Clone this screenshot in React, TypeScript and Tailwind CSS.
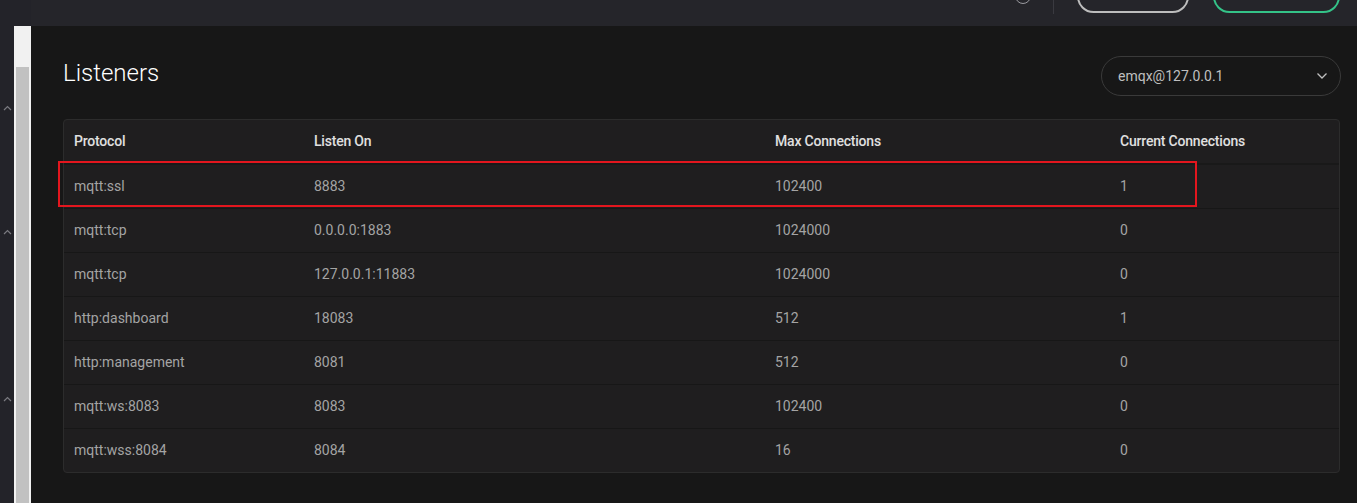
import React from "react";

const rows = [
  ["mqtt:ssl", "8883", "102400", "1"],
  ["mqtt:tcp", "0.0.0.0:1883", "1024000", "0"],
  ["mqtt:tcp", "127.0.0.1:11883", "1024000", "0"],
  ["http:dashboard", "18083", "512", "1"],
  ["http:management", "8081", "512", "0"],
  ["mqtt:ws:8083", "8083", "102400", "0"],
  ["mqtt:wss:8084", "8084", "16", "0"],
];

function Chevron() {
  return (
    <svg width="9" height="6" viewBox="0 0 9 6" className="block">
      <path d="M1 5 L4.5 1.5 L8 5" stroke="#7a7a80" strokeWidth="1.2" fill="none" />
    </svg>
  );
}

export default function App() {
  return (
    <div
      className="w-[1357px] h-[503px] overflow-hidden flex bg-[#171717]"
      style={{ fontFamily: "Roboto, 'Liberation Sans', sans-serif" }}
    >
      {/* left sidebar strip */}
      <div className="w-[14px] h-full bg-[#232329] flex flex-col items-center">
        <div className="mt-[105px]"><Chevron /></div>
        <div className="mt-[118px]"><Chevron /></div>
        <div className="mt-[161px]"><Chevron /></div>
      </div>
      {/* scrollbar column */}
      <div className="w-[17px] h-full flex flex-col">
        <div className="h-[26px] bg-[#232329]" />
        <div className="flex-1 bg-[#f1f1f1] pt-[41px] px-[2px]">
          <div className="h-full bg-[#c1c1c1]" />
        </div>
      </div>
      {/* main */}
      <div className="flex-1 h-full flex flex-col">
        <div className="h-[26px] bg-[#25252a] relative shrink-0">
          <div className="absolute left-[984px] top-[-12px] w-[16px] h-[16px] rounded-full border border-[#9a9aa0]" />
          <div className="absolute left-[1022px] top-0 w-px h-[14px] bg-[#3a3a40]" />
          <div className="absolute left-[1046px] top-[-20px] w-[112px] h-[33px] rounded-full border-2 border-[#bdbdbd]" />
          <div className="absolute left-[1182px] top-[-20px] w-[127px] h-[33px] rounded-full border-2 border-[#34c388]" />
        </div>
        <div className="flex-1 relative pl-[32px] pr-[17px]">
          <div className="flex items-center justify-between pt-[30px]">
            <h1 className="text-[24px] font-light text-white leading-[30px] mt-[-6px]">Listeners</h1>
            <div className="w-[240px] h-[40px] rounded-full border border-[#3a3a3a] flex items-center justify-between pl-[16px] pr-[12px] mr-[-1px]">
              <span className="text-[14px] text-[#bfbfbf]">emqx@127.0.0.1</span>
              <svg width="12" height="8" viewBox="0 0 12 8">
                <path d="M1.5 1.5 L6 6 L10.5 1.5" stroke="#bfbfbf" strokeWidth="1.3" fill="none" />
              </svg>
            </div>
          </div>
          <div className="mt-[23px] w-[1277px] rounded-[4px] border border-[#2c2c2c] bg-[#1f1e1f] overflow-hidden">
            <div className="grid grid-cols-[240px_461px_345px_1fr] h-[45px] items-center border-b-2 border-[#191919] text-[14px] text-[#e0e0e0] font-medium tracking-[-0.2px]">
              <div className="pl-[10px]">Protocol</div>
              <div className="pl-[10px]">Listen On</div>
              <div className="pl-[10px]">Max Connections</div>
              <div className="pl-[10px]">Current Connections</div>
            </div>
            {rows.map((r, i) => (
              <div
                key={i}
                className={`grid grid-cols-[240px_461px_345px_1fr] items-center text-[14px] text-[#a4a4a4] ${i < rows.length - 1 ? "h-[44px] border-b border-[#171717]" : "h-[43px]"}`}
              >
                {r.map((c, j) => (
                  <div key={j} className="pl-[10px]">{c}</div>
                ))}
              </div>
            ))}
          </div>
          <div className="absolute left-[27px] top-[135px] w-[1139px] h-[46px] border-2 border-[#e3161e] pointer-events-none" />
        </div>
      </div>
    </div>
  );
}
